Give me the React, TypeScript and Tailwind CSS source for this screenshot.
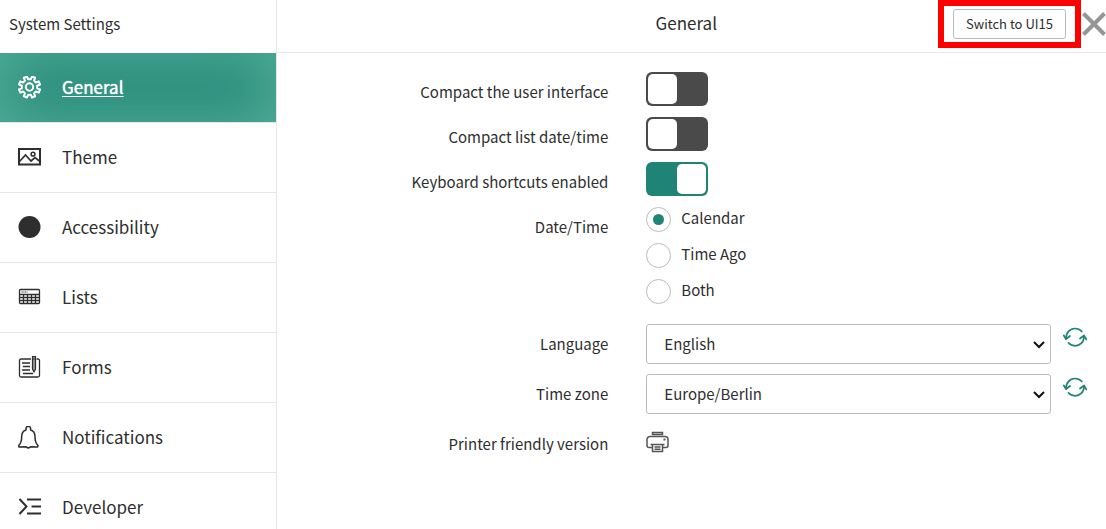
import React, { useState } from 'react';

type NavItem = {
  key: string;
  label: string;
  icon: React.ReactNode;
};

// eight teeth, with a gap at the top
const gearPoints = Array.from({ length: 8 })
  .flatMap((_, i) => {
    const mid = i * 45 + 22.5;
    return [
      [mid - 13, 7.8],
      [mid - 9, 10.8],
      [mid + 9, 10.8],
      [mid + 13, 7.8],
    ];
  })
  .map(([deg, r]) => {
    const a = (deg * Math.PI) / 180;
    return `${(11.5 + r * Math.sin(a)).toFixed(2)},${(11 - r * Math.cos(a)).toFixed(2)}`;
  })
  .join(' ');

const Icon = ({ children }: { children: React.ReactNode }) => (
  <svg
    viewBox="0 0 24 24"
    className="h-6 w-6 shrink-0"
    fill="none"
    stroke="currentColor"
    strokeWidth="1.5"
    aria-hidden="true"
  >
    {children}
  </svg>
);

const navItems: NavItem[] = [
  {
    key: 'general',
    label: 'General',
    icon: (
      <Icon>
        <polygon points={gearPoints} strokeWidth="2" strokeLinejoin="round" />
        <circle cx="11.5" cy="11" r="3.7" strokeWidth="2" />
      </Icon>
    ),
  },
  {
    key: 'theme',
    label: 'Theme',
    icon: (
      <Icon>
        <rect x="1" y="3" width="21" height="15.5" strokeWidth="2" />
        <path d="M1.500 15.500 7.500 9l5.500 6 4-3.500 5 4" strokeWidth="1.700" />
        <circle cx="15" cy="8.200" r="1.900" />
      </Icon>
    ),
  },
  {
    key: 'accessibility',
    label: 'Accessibility',
    icon: (
      <Icon>
        <circle cx="11.5" cy="11" r="11" fill="currentColor" stroke="none" />
      </Icon>
    ),
  },
  {
    key: 'lists',
    label: 'Lists',
    icon: (
      <Icon>
        <rect x="1.5" y="3.5" width="20" height="14" rx="1" strokeWidth="1.3" />
        <path d="M1.5 8.5h20M1.5 11.5h20M1.5 14.5h20M5.5 8.5v9M9.5 8.5v9M13.5 8.5v9M17.5 8.5v9" strokeWidth="1.3" />
        <path d="M3.5 6h6" strokeWidth="1" strokeDasharray="1.2 .6" />
      </Icon>
    ),
  },
  {
    key: 'forms',
    label: 'Forms',
    icon: (
      <Icon>
        <path d="M13 3H3a1.5 1.5 0 0 0-1.5 1.5v15A1.5 1.5 0 0 0 3 21h17a1.5 1.5 0 0 0 1.5-1.5v-15A1.5 1.5 0 0 0 20 3h-1.5" strokeWidth="1.3" />
        <path d="M4 7h8M5 10.5h7M4 14h8M5 17.5h10" strokeWidth="1.3" />
        <path d="M14.5.5h3V13l-1.5 3-1.5-3zM14.5 3h3" fill="#999" strokeWidth="1.2" />
      </Icon>
    ),
  },
  {
    key: 'notifications',
    label: 'Notifications',
    icon: (
      <Icon>
        <path
          d="M8 4V2.5a2 2 0 0 1 2-2h.6a2 2 0 0 1 2 2V4c3 1 4.4 3.5 4.4 6.5 0 4.5.8 7 3 9l-.4 1.5-6.6-.3L10.3 22l-2.700-1.300-6.600.3-.3-1.500c2.200-2 3-4.500 3-9C3.700 7.500 5 5 8 4z"
          strokeWidth="1.5"
          strokeLinejoin="round"
        />
      </Icon>
    ),
  },
  {
    key: 'developer',
    label: 'Developer',
    icon: (
      <Icon>
        <path d="M1.500 3l7 7.500-7 7.500M9 3.500h14M13.500 10.500H23M9 17.500h14" strokeWidth="2" />
      </Icon>
    ),
  },
];

const RefreshIcon = () => (
  <svg
    viewBox="0 0 24 24"
    className="h-6 w-6"
    fill="none"
    stroke="currentColor"
    strokeWidth="1.7"
    strokeLinecap="round"
    strokeLinejoin="round"
    aria-hidden="true"
  >
    <path d="M3 14C2.8 7.5 7 3.5 12 3.5c3 0 5 1 6.8 3" />
    <path d="M21 11c.2 6-4 9.8-9 9.800-2.800 0-5-1-6.600-3" />
    <path d="M.8 10.500 3 14l4-3M17 13.500l4-3 2.400 4" />
  </svg>
);

const PrinterIcon = () => (
  <svg viewBox="0 0 24 24" className="h-6 w-6" fill="none" stroke="#555" strokeWidth="1.5" aria-hidden="true">
    <path d="M6.500 2.500h10v2h-10z" />
    <path d="M6 17.500H3a2 2 0 0 1-2-2v-6a3 3 0 0 1 3-3h15a3 3 0 0 1 3 3v6a2 2 0 0 1-2 2h-3" />
    <path d="M4.500 14.500h14M6.500 14.500v7h10v-7M8.500 17h6M8.500 19.300h6" />
    <path d="M17.500 9.500h2" strokeWidth="2" />
  </svg>
);

const toggles = [
  { id: 'compact-ui', label: 'Compact the user interface', on: false },
  { id: 'compact-date', label: 'Compact list date/time', on: false },
  { id: 'shortcuts', label: 'Keyboard shortcuts enabled', on: true },
];

const dateFormats = ['Calendar', 'Time Ago', 'Both'];

const selects = [
  { id: 'language', label: 'Language', options: ['English', 'German', 'French'] },
  { id: 'timezone', label: 'Time zone', options: ['Europe/Berlin', 'Europe/London', 'US/Pacific'] },
];

const rowClass = 'grid grid-cols-[40%_1fr] gap-x-[38px]';
const labelClass = 'pt-2 text-right';

export default function App() {
  const [active, setActive] = useState('general');
  const [dateFormat, setDateFormat] = useState('Calendar');

  return (
    <div className="flex min-h-screen bg-white font-['Noto_Sans_CJK_SC','Noto_Sans',sans-serif] text-[15px] leading-6 text-[#2e2e2e]">
      <aside className="w-1/4 max-w-[277px] shrink-0 border-r border-[#e6e6e6]">
        <h1 className="flex h-[53px] items-center px-[9px] pb-[6px]">System Settings</h1>
        <nav className="h-[calc(100vh-53px)] overflow-hidden">
          {navItems.map((item) => (
            <a
              key={item.key}
              href={`#${item.key}`}
              onClick={() => setActive(item.key)}
              className={
                active === item.key
                  ? 'flex h-[70px] items-center gap-5 border-b border-[#e6e6e6] bg-[#288a7a] pl-[18px] text-[17px] text-white underline underline-offset-2 shadow-[inset_0_0_60px_#54b29b] text-shadow-[0_0_1px_#fff]'
                  : 'flex h-[70px] items-center gap-5 border-b border-[#e6e6e6] pl-[18px] text-[17px]'
              }
            >
              {item.icon}
              <span className="pb-[2px]">{item.label}</span>
            </a>
          ))}
        </nav>
      </aside>

      <main className="min-w-0 flex-1">
        <header className="grid h-[53px] grid-cols-[1fr_auto_1fr] items-start border-b border-[#e6e6e6]">
          <h2 className="col-start-2 pt-[11px] pr-[10px] text-[17px]">General</h2>
          <div className="flex items-center justify-end gap-px">
            <div className="border-6 border-[#f00] px-[9px] py-[3px]">
              <button
                type="button"
                className="h-[30px] rounded-[3px] border border-[#bbb] px-3 text-[13px] leading-6 whitespace-nowrap"
              >
                Switch to UI15
              </button>
            </div>
            <button type="button" aria-label="Close" className="text-[#959595]">
              <svg viewBox="0 0 24 24" className="h-6 w-6" fill="none" stroke="currentColor" strokeWidth="4">
                <path d="M1.500 1.500l21 21M22.500 1.500l-21 21" />
              </svg>
            </button>
          </div>
        </header>

        <form className="pt-[19px]">
          {toggles.map((toggle) => (
            <div key={toggle.id} className={`${rowClass} h-[45px]`}>
              <label htmlFor={toggle.id} className={labelClass}>
                {toggle.label}
              </label>
              <input
                id={toggle.id}
                type="checkbox"
                role="switch"
                defaultChecked={toggle.on}
                className="flex h-[34px] w-[62px] appearance-none rounded-[6px] bg-[#4a4a4a] p-[2px] before:h-[30px] before:w-[29px] before:rounded-[5px] before:bg-white checked:justify-end checked:bg-[#1f8476]"
              />
            </div>
          ))}

          <div role="radiogroup" aria-labelledby="date-format" className={`${rowClass} mb-[9px]`}>
            <span id="date-format" className={labelClass}>
              Date/Time
            </span>
            <div>
              {dateFormats.map((format) => (
                <label key={format} className="flex h-9 items-start gap-[10px] leading-[22px]">
                  <input
                    type="radio"
                    name="date-format"
                    checked={dateFormat === format}
                    onChange={() => setDateFormat(format)}
                    className="flex h-[25px] w-[25px] appearance-none items-center justify-center rounded-full border border-[#bbb] checked:before:h-[11px] checked:before:w-[11px] checked:before:rounded-full checked:before:bg-[#1f8476]"
                  />
                  {format}
                </label>
              ))}
            </div>
          </div>

          {selects.map((select) => (
            <div key={select.id} className={`${rowClass} h-[50px]`}>
              <label htmlFor={select.id} className={labelClass}>
                {select.label}
              </label>
              <div className="flex items-start gap-3 pr-[19px]">
                <div className="relative min-w-0 flex-1">
                  <select
                    id={select.id}
                    className="h-10 w-full appearance-none rounded-[3px] border border-[#bbb] bg-white pr-8 pl-[17px]"
                  >
                    {select.options.map((option) => (
                      <option key={option}>{option}</option>
                    ))}
                  </select>
                  <svg
                    viewBox="0 0 12 8"
                    className="pointer-events-none absolute top-[17px] right-[6px] h-2 w-3"
                    fill="none"
                    stroke="#111"
                    strokeWidth="2"
                    aria-hidden="true"
                  >
                    <path d="M1 1l5 5 5-5" />
                  </svg>
                </div>
                <button type="button" aria-label={`Reset ${select.label}`} className="mt-px text-[#1f8476]">
                  <RefreshIcon />
                </button>
              </div>
            </div>
          ))}

          <div className={rowClass}>
            <span className={labelClass}>Printer friendly version</span>
            <button type="button" aria-label="Printer friendly version" className="mt-1 justify-self-start">
              <PrinterIcon />
            </button>
          </div>
        </form>
      </main>
    </div>
  );
}
